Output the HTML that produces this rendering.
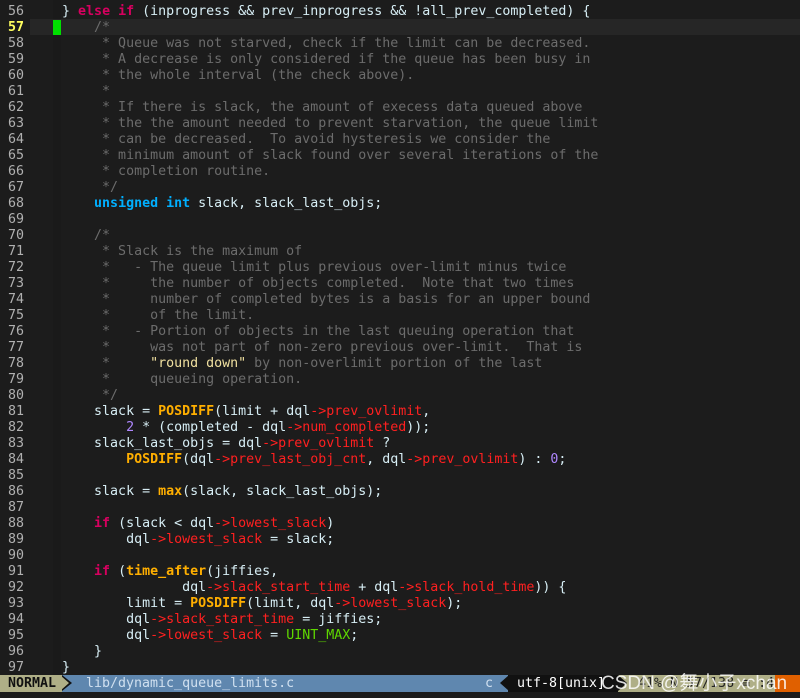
<!DOCTYPE html>
<html><head><meta charset="utf-8"><style>
body{margin:0;width:800px;height:698px;background:#1c1c1c;overflow:hidden;position:relative;font-family:"DejaVu Sans Mono","Liberation Mono",monospace;font-size:13.3px;}
.l{position:absolute;left:0;height:16px;line-height:18px;width:800px;white-space:pre;color:#d7eef5}
.n{position:absolute;left:0;width:24px;text-align:right;color:#b0b0b0}
.t{position:absolute;left:30px}
.cur{background:#262626}
.c{color:#6c6c6c}.k{color:#d7005f;font-weight:bold}.ty{color:#00afff;font-weight:bold}.m{color:#ffaf00;font-weight:bold}.a{color:#ff2020}.nu{color:#af87ff}.s{color:#f0e0a0}.g{color:#5fd700}
#sb{position:absolute;left:0;top:675px;height:17px;width:800px;line-height:17px;background:#5f87af;color:#d0e0f0}
#sb span{position:absolute;top:0;white-space:pre}
</style></head><body>
<div id="g" style="position:absolute;left:53px;top:0;width:8px;height:675px;background:#1a1a1a"></div>
<div class="l" style="top:3px"><span class="n">56</span><span class="t">    } <span class="k">else if</span> (inprogress &amp;&amp; prev_inprogress &amp;&amp; !all_prev_completed) {</span></div>
<div class="l" style="top:19px"><div class="cur" style="position:absolute;left:30px;top:0;width:770px;height:16px"></div><span class="n" style="color:#ffff5f;font-weight:bold">57</span><div style="position:absolute;left:53px;top:1px;width:8px;height:15px;background:#00e000"></div><span class="t c">        /*</span></div>
<div class="l" style="top:35px"><span class="n">58</span><span class="t c">         * Queue was not starved, check if the limit can be decreased.</span></div>
<div class="l" style="top:51px"><span class="n">59</span><span class="t c">         * A decrease is only considered if the queue has been busy in</span></div>
<div class="l" style="top:67px"><span class="n">60</span><span class="t c">         * the whole interval (the check above).</span></div>
<div class="l" style="top:83px"><span class="n">61</span><span class="t c">         *</span></div>
<div class="l" style="top:99px"><span class="n">62</span><span class="t c">         * If there is slack, the amount of execess data queued above</span></div>
<div class="l" style="top:115px"><span class="n">63</span><span class="t c">         * the the amount needed to prevent starvation, the queue limit</span></div>
<div class="l" style="top:131px"><span class="n">64</span><span class="t c">         * can be decreased.  To avoid hysteresis we consider the</span></div>
<div class="l" style="top:147px"><span class="n">65</span><span class="t c">         * minimum amount of slack found over several iterations of the</span></div>
<div class="l" style="top:163px"><span class="n">66</span><span class="t c">         * completion routine.</span></div>
<div class="l" style="top:179px"><span class="n">67</span><span class="t c">         */</span></div>
<div class="l" style="top:195px"><span class="n">68</span><span class="t">        <span class="ty">unsigned int</span> slack, slack_last_objs;</span></div>
<div class="l" style="top:211px"><span class="n">69</span></div>
<div class="l" style="top:227px"><span class="n">70</span><span class="t c">        /*</span></div>
<div class="l" style="top:243px"><span class="n">71</span><span class="t c">         * Slack is the maximum of</span></div>
<div class="l" style="top:259px"><span class="n">72</span><span class="t c">         *   - The queue limit plus previous over-limit minus twice</span></div>
<div class="l" style="top:275px"><span class="n">73</span><span class="t c">         *     the number of objects completed.  Note that two times</span></div>
<div class="l" style="top:291px"><span class="n">74</span><span class="t c">         *     number of completed bytes is a basis for an upper bound</span></div>
<div class="l" style="top:307px"><span class="n">75</span><span class="t c">         *     of the limit.</span></div>
<div class="l" style="top:323px"><span class="n">76</span><span class="t c">         *   - Portion of objects in the last queuing operation that</span></div>
<div class="l" style="top:339px"><span class="n">77</span><span class="t c">         *     was not part of non-zero previous over-limit.  That is</span></div>
<div class="l" style="top:355px"><span class="n">78</span><span class="t c">         *     <span class="s">"round down"</span> by non-overlimit portion of the last</span></div>
<div class="l" style="top:371px"><span class="n">79</span><span class="t c">         *     queueing operation.</span></div>
<div class="l" style="top:387px"><span class="n">80</span><span class="t c">         */</span></div>
<div class="l" style="top:403px"><span class="n">81</span><span class="t">        slack = <span class="m">POSDIFF</span>(limit + dql<span class="a">-&gt;prev_ovlimit</span>,</span></div>
<div class="l" style="top:419px"><span class="n">82</span><span class="t">            <span class="nu">2</span> * (completed - dql<span class="a">-&gt;num_completed</span>));</span></div>
<div class="l" style="top:435px"><span class="n">83</span><span class="t">        slack_last_objs = dql<span class="a">-&gt;prev_ovlimit</span> ?</span></div>
<div class="l" style="top:451px"><span class="n">84</span><span class="t">            <span class="m">POSDIFF</span>(dql<span class="a">-&gt;prev_last_obj_cnt</span>, dql<span class="a">-&gt;prev_ovlimit</span>) : <span class="nu">0</span>;</span></div>
<div class="l" style="top:467px"><span class="n">85</span></div>
<div class="l" style="top:483px"><span class="n">86</span><span class="t">        slack = <span class="m">max</span>(slack, slack_last_objs);</span></div>
<div class="l" style="top:499px"><span class="n">87</span></div>
<div class="l" style="top:515px"><span class="n">88</span><span class="t">        <span class="k">if</span> (slack &lt; dql<span class="a">-&gt;lowest_slack</span>)</span></div>
<div class="l" style="top:531px"><span class="n">89</span><span class="t">            dql<span class="a">-&gt;lowest_slack</span> = slack;</span></div>
<div class="l" style="top:547px"><span class="n">90</span></div>
<div class="l" style="top:563px"><span class="n">91</span><span class="t">        <span class="k">if</span> (<span class="m">time_after</span>(jiffies,</span></div>
<div class="l" style="top:579px"><span class="n">92</span><span class="t">                   dql<span class="a">-&gt;slack_start_time</span> + dql<span class="a">-&gt;slack_hold_time</span>)) {</span></div>
<div class="l" style="top:595px"><span class="n">93</span><span class="t">            limit = <span class="m">POSDIFF</span>(limit, dql<span class="a">-&gt;lowest_slack</span>);</span></div>
<div class="l" style="top:611px"><span class="n">94</span><span class="t">            dql<span class="a">-&gt;slack_start_time</span> = jiffies;</span></div>
<div class="l" style="top:627px"><span class="n">95</span><span class="t">            dql<span class="a">-&gt;lowest_slack</span> = <span class="g">UINT_MAX</span>;</span></div>
<div class="l" style="top:643px"><span class="n">96</span><span class="t">        }</span></div>
<div class="l" style="top:659px"><span class="n">97</span><span class="t">    }</span></div>
<div id="sb"><span style="left:0;width:62px;height:17px;background:#afaf87;color:#111;font-weight:bold"> NORMAL</span><span style="left:62px;width:0;height:0;border-top:8.5px solid transparent;border-bottom:8.5px solid transparent;border-left:10px solid #111"></span><span style="left:60px;width:0;height:0;border-top:8.5px solid transparent;border-bottom:8.5px solid transparent;border-left:9px solid #afaf87"></span><span style="left:86px">lib/dynamic_queue_limits.c</span><span style="left:485px">c</span><span style="left:508px;width:110px;height:17px;background:#111"></span><span style="left:500px;width:0;height:0;border-top:8.5px solid transparent;border-bottom:8.5px solid transparent;border-right:9px solid #111"></span><span style="left:517px;color:#fff">utf-8[unix]</span><span style="left:618px;width:160px;height:17px;background:#afaf87"></span><span style="left:618px;width:0;height:0;border-top:8.5px solid transparent;border-bottom:8.5px solid transparent;border-left:9px solid #111"></span><span style="left:630px;color:#222"> 41% N 57/138 ≡ :4</span><span style="left:775px;width:25px;height:17px;background:#e06000"></span></div>
<div style="position:absolute;left:601px;top:668px;font-family:'Liberation Sans','Noto Sans CJK SC',sans-serif;font-size:19px;color:rgba(255,255,255,0.85);white-space:nowrap">CSDN @舞小子xchan</div>
<div style="position:absolute;left:0;top:692px;width:800px;height:6px;background:#1c1c1c"></div>
</body></html>
